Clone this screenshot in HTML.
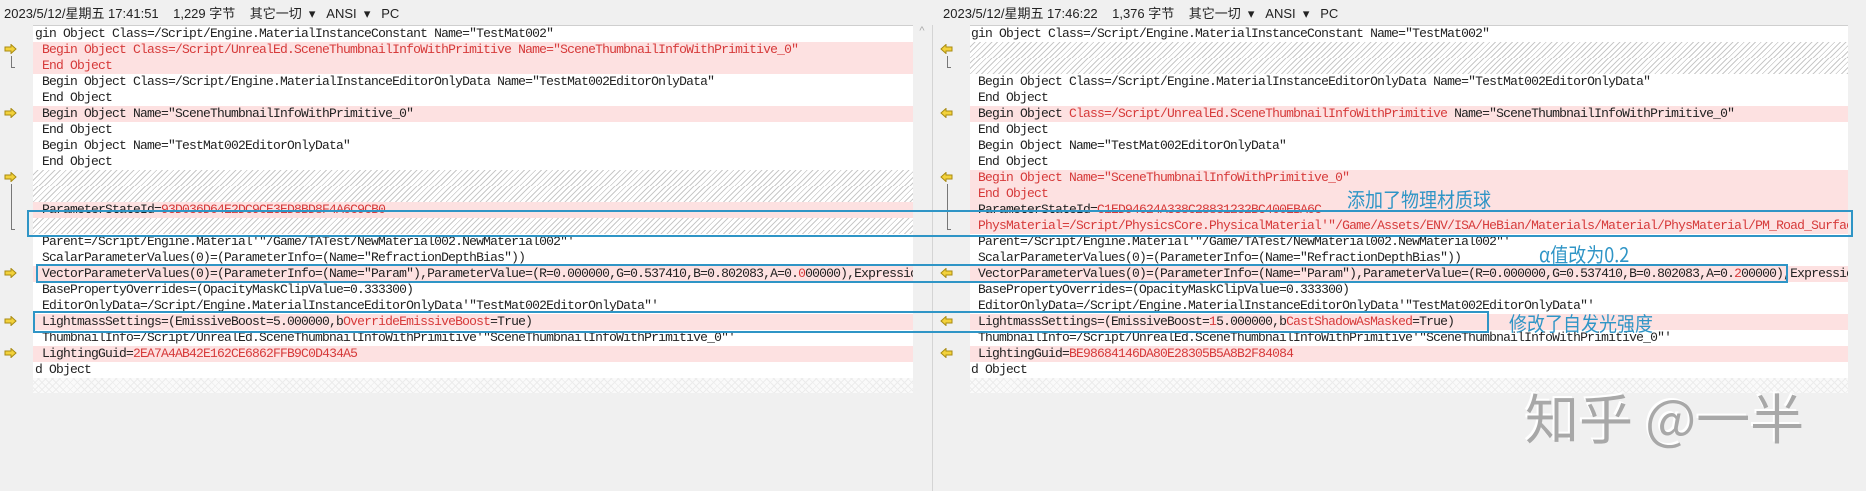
<!DOCTYPE html>
<html><head><meta charset="utf-8"><style>
*{margin:0;padding:0;box-sizing:border-box}
body{width:1866px;height:491px;background:#f0f0f0;position:relative;overflow:hidden;font-family:"Liberation Mono","Noto Sans CJK SC",monospace}
.hdr{position:absolute;top:3px;font:13px "Liberation Sans","Noto Sans CJK SC",sans-serif;color:#222;white-space:pre}
.pane{position:absolute;top:25px;height:368px;background:#fff;overflow:hidden;border-top:1px solid #cfcfcf}
.r{position:absolute;left:0;right:0;height:16px;font-size:13px;letter-spacing:-0.8px;line-height:16px;color:#222;white-space:pre}
.red{background:#fde1e1}
.h{background:repeating-linear-gradient(135deg,#fff 0 3px,#c9c9c9 3px 4px)}
.x{background:repeating-linear-gradient(135deg,transparent 0 4px,#ececec 4px 5px),repeating-linear-gradient(45deg,#fafafa 0 4px,#ececec 4px 5px)}
.t{color:#d63a3a}
.box{position:absolute;border:2px solid #2f95c6}
.ann{position:absolute;font:20px "Noto Sans CJK SC",sans-serif;color:#2f95c6;white-space:nowrap;transform:scaleX(.9);transform-origin:left}
.arr{position:absolute;width:13px;height:10px}
.br{position:absolute;border-left:1px solid #777;border-bottom:1px solid #777;width:4px}
.sb{position:absolute;top:25px;width:18px;height:368px;background:#f0f0f0;color:#aaa;font:11px sans-serif;text-align:center}
</style></head><body>
<div class="hdr" style="left:4px">2023/5/12/星期五 17:41:51    1,229 字节    其它一切  ▾   ANSI  ▾   PC</div>
<div class="hdr" style="left:943px">2023/5/12/星期五 17:46:22    1,376 字节    其它一切  ▾   ANSI  ▾   PC</div>

<div class="pane" style="left:33px;width:880px">
<div class="r" style="top:0;padding-left:2px">gin Object Class=/Script/Engine.MaterialInstanceConstant Name="TestMat002"</div>
<div class="r red t" style="top:16px;padding-left:9px">Begin Object Class=/Script/UnrealEd.SceneThumbnailInfoWithPrimitive Name="SceneThumbnailInfoWithPrimitive_0"</div>
<div class="r red t" style="top:32px;padding-left:9px">End Object</div>
<div class="r" style="top:48px;padding-left:9px">Begin Object Class=/Script/Engine.MaterialInstanceEditorOnlyData Name="TestMat002EditorOnlyData"</div>
<div class="r" style="top:64px;padding-left:9px">End Object</div>
<div class="r red" style="top:80px;padding-left:9px">Begin Object Name="SceneThumbnailInfoWithPrimitive_0"</div>
<div class="r" style="top:96px;padding-left:9px">End Object</div>
<div class="r" style="top:112px;padding-left:9px">Begin Object Name="TestMat002EditorOnlyData"</div>
<div class="r" style="top:128px;padding-left:9px">End Object</div>
<div class="r h" style="top:144px"></div>
<div class="r h" style="top:160px"></div>
<div class="r red" style="top:176px;padding-left:9px">ParameterStateId=<span class="t">93D036D64E2DC9CE3ED8BD8F4A6C9CB0</span></div>
<div class="r h" style="top:192px"></div>
<div class="r" style="top:208px;padding-left:9px">Parent=/Script/Engine.Material'"/Game/TATest/NewMaterial002.NewMaterial002"'</div>
<div class="r" style="top:224px;padding-left:9px">ScalarParameterValues(0)=(ParameterInfo=(Name="RefractionDepthBias"))</div>
<div class="r red" style="top:240px;padding-left:9px">VectorParameterValues(0)=(ParameterInfo=(Name="Param"),ParameterValue=(R=0.000000,G=0.537410,B=0.802083,A=0.<span class="t">0</span>00000),ExpressionGUID=</div>
<div class="r" style="top:256px;padding-left:9px">BasePropertyOverrides=(OpacityMaskClipValue=0.333300)</div>
<div class="r" style="top:272px;padding-left:9px">EditorOnlyData=/Script/Engine.MaterialInstanceEditorOnlyData'"TestMat002EditorOnlyData"'</div>
<div class="r red" style="top:288px;padding-left:9px">LightmassSettings=(EmissiveBoost=5.000000,b<span class="t">OverrideEmissiveBoost</span>=True)</div>
<div class="r" style="top:304px;padding-left:9px">ThumbnailInfo=/Script/UnrealEd.SceneThumbnailInfoWithPrimitive'"SceneThumbnailInfoWithPrimitive_0"'</div>
<div class="r red" style="top:320px;padding-left:9px">LightingGuid=<span class="t">2EA7A4AB42E162CE6862FFB9C0D434A5</span></div>
<div class="r" style="top:336px;padding-left:2px">d Object</div>
<div class="r x" style="top:352px"></div>
</div>
<div class="sb" style="left:913px">^</div>

<div class="pane" style="left:970px;width:878px">
<div class="r" style="top:0;padding-left:1px">gin Object Class=/Script/Engine.MaterialInstanceConstant Name="TestMat002"</div>
<div class="r h" style="top:16px"></div>
<div class="r h" style="top:32px"></div>
<div class="r" style="top:48px;padding-left:8px">Begin Object Class=/Script/Engine.MaterialInstanceEditorOnlyData Name="TestMat002EditorOnlyData"</div>
<div class="r" style="top:64px;padding-left:8px">End Object</div>
<div class="r red" style="top:80px;padding-left:8px">Begin Object <span class="t">Class=/Script/UnrealEd.SceneThumbnailInfoWithPrimitive</span> Name="SceneThumbnailInfoWithPrimitive_0"</div>
<div class="r" style="top:96px;padding-left:8px">End Object</div>
<div class="r" style="top:112px;padding-left:8px">Begin Object Name="TestMat002EditorOnlyData"</div>
<div class="r" style="top:128px;padding-left:8px">End Object</div>
<div class="r red t" style="top:144px;padding-left:8px">Begin Object Name="SceneThumbnailInfoWithPrimitive_0"</div>
<div class="r red t" style="top:160px;padding-left:8px">End Object</div>
<div class="r red" style="top:176px;padding-left:8px">ParameterStateId=<span class="t">C1ED94624A338C28831232BC400EBA6C</span></div>
<div class="r red t" style="top:192px;padding-left:8px">PhysMaterial=/Script/PhysicsCore.PhysicalMaterial'"/Game/Assets/ENV/ISA/HeBian/Materials/Material/PhysMaterial/PM_Road_Surface"'</div>
<div class="r" style="top:208px;padding-left:8px">Parent=/Script/Engine.Material'"/Game/TATest/NewMaterial002.NewMaterial002"'</div>
<div class="r" style="top:224px;padding-left:8px">ScalarParameterValues(0)=(ParameterInfo=(Name="RefractionDepthBias"))</div>
<div class="r red" style="top:240px;padding-left:8px">VectorParameterValues(0)=(ParameterInfo=(Name="Param"),ParameterValue=(R=0.000000,G=0.537410,B=0.802083,A=0.<span class="t">2</span>00000),ExpressionGUID=</div>
<div class="r" style="top:256px;padding-left:8px">BasePropertyOverrides=(OpacityMaskClipValue=0.333300)</div>
<div class="r" style="top:272px;padding-left:8px">EditorOnlyData=/Script/Engine.MaterialInstanceEditorOnlyData'"TestMat002EditorOnlyData"'</div>
<div class="r red" style="top:288px;padding-left:8px">LightmassSettings=(EmissiveBoost=<span class="t">1</span>5.000000,b<span class="t">CastShadowAsMasked</span>=True)</div>
<div class="r" style="top:304px;padding-left:8px">ThumbnailInfo=/Script/UnrealEd.SceneThumbnailInfoWithPrimitive'"SceneThumbnailInfoWithPrimitive_0"'</div>
<div class="r red" style="top:320px;padding-left:8px">LightingGuid=<span class="t">BE98684146DA80E28305B5A8B2F84084</span></div>
<div class="r" style="top:336px;padding-left:1px">d Object</div>
<div class="r x" style="top:352px"></div>
</div>
<div class="sb" style="left:1848px"></div>
<div style="position:absolute;left:932px;top:25px;width:1px;height:466px;background:#d4d4d4"></div>

<svg class="arr" style="left:4px;top:44px" viewBox="0 0 13 10"><path d="M1 3H7V0.5L12 5L7 9.5V7H1Z" fill="#f3d23c" stroke="#a88a10"/></svg>
<div class="br" style="left:11px;top:56px;height:12px"></div>
<svg class="arr" style="left:4px;top:108px" viewBox="0 0 13 10"><path d="M1 3H7V0.5L12 5L7 9.5V7H1Z" fill="#f3d23c" stroke="#a88a10"/></svg>
<svg class="arr" style="left:4px;top:172px" viewBox="0 0 13 10"><path d="M1 3H7V0.5L12 5L7 9.5V7H1Z" fill="#f3d23c" stroke="#a88a10"/></svg>
<div class="br" style="left:11px;top:184px;height:46px"></div>
<svg class="arr" style="left:4px;top:268px" viewBox="0 0 13 10"><path d="M1 3H7V0.5L12 5L7 9.5V7H1Z" fill="#f3d23c" stroke="#a88a10"/></svg>
<svg class="arr" style="left:4px;top:316px" viewBox="0 0 13 10"><path d="M1 3H7V0.5L12 5L7 9.5V7H1Z" fill="#f3d23c" stroke="#a88a10"/></svg>
<svg class="arr" style="left:4px;top:348px" viewBox="0 0 13 10"><path d="M1 3H7V0.5L12 5L7 9.5V7H1Z" fill="#f3d23c" stroke="#a88a10"/></svg>
<svg class="arr" style="left:940px;top:44px" viewBox="0 0 13 10"><path d="M12 3H6V0.5L1 5L6 9.5V7H12Z" fill="#f3d23c" stroke="#a88a10"/></svg>
<div class="br" style="left:947px;top:56px;height:12px"></div>
<svg class="arr" style="left:940px;top:108px" viewBox="0 0 13 10"><path d="M12 3H6V0.5L1 5L6 9.5V7H12Z" fill="#f3d23c" stroke="#a88a10"/></svg>
<svg class="arr" style="left:940px;top:172px" viewBox="0 0 13 10"><path d="M12 3H6V0.5L1 5L6 9.5V7H12Z" fill="#f3d23c" stroke="#a88a10"/></svg>
<div class="br" style="left:947px;top:184px;height:46px"></div>
<svg class="arr" style="left:940px;top:268px" viewBox="0 0 13 10"><path d="M12 3H6V0.5L1 5L6 9.5V7H12Z" fill="#f3d23c" stroke="#a88a10"/></svg>
<svg class="arr" style="left:940px;top:316px" viewBox="0 0 13 10"><path d="M12 3H6V0.5L1 5L6 9.5V7H12Z" fill="#f3d23c" stroke="#a88a10"/></svg>
<svg class="arr" style="left:940px;top:348px" viewBox="0 0 13 10"><path d="M12 3H6V0.5L1 5L6 9.5V7H12Z" fill="#f3d23c" stroke="#a88a10"/></svg>

<div class="box" style="left:27px;top:210px;width:1826px;height:27px"></div>
<div class="box" style="left:36px;top:264px;width:1752px;height:19px"></div>
<div class="box" style="left:33px;top:311px;width:1456px;height:22px"></div>
<div class="ann" style="left:1347px;top:184px">添加了物理材质球</div>
<div class="ann" style="left:1539px;top:239px">α值改为0.2</div>
<div class="ann" style="left:1509px;top:308px">修改了自发光强度</div>
<div style="position:absolute;left:1525px;top:386px;font:54px 'Noto Sans CJK SC',sans-serif;color:#a8a8a8;text-shadow:-2px -2px 0 #fff;white-space:nowrap;line-height:60px">知乎 @一半</div>
</body></html>
